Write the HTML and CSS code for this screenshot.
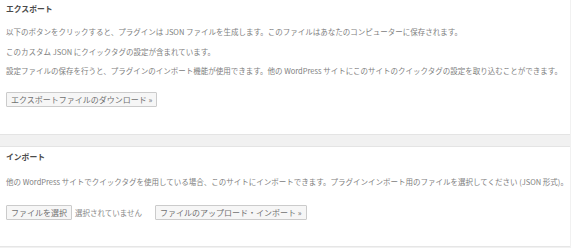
FILE: index.html
```html
<!DOCTYPE html>
<html lang="ja">
<head>
    <meta charset="UTF-8">
    <meta name="viewport" content="width=device-width, initial-scale=1.0">
    <title>エクスポート / インポート</title>
    <link rel="stylesheet" href="styles.css">
</head>
<body>
    <div class="wrap">
        <div class="panel export">
            <h2>エクスポート</h2>
            <p>以下のボタンをクリックすると、プラグインは JSON ファイルを生成します。このファイルはあなたのコンピューターに保存されます。</p>
            <p>このカスタム JSON にクイックタグの設定が含まれています。</p>
            <p>設定ファイルの保存を行うと、プラグインのインポート機能が使用できます。他の WordPress サイトにこのサイトのクイックタグの設定を取り込むことができます。</p>
            <button class="btn" type="button">エクスポートファイルのダウンロード »</button>
        </div>

        <div class="divider"></div>

        <div class="panel import">
            <h2>インポート</h2>
            <p>他の WordPress サイトでクイックタグを使用している場合、このサイトにインポートできます。プラグインインポート用のファイルを選択してください (JSON 形式)。</p>
            <div class="file-row">
                <button class="btn" type="button">ファイルを選択</button>
                <span class="file-name">選択されていません</span>
                <button class="btn upload" type="button">ファイルのアップロード・インポート »</button>
            </div>
        </div>
    </div>
</body>
</html>
```

FILE: styles.css
```css
body {
    margin: 0;
    background: #f1f1f1;
    font-family: "Noto Sans CJK JP", "Noto Sans", sans-serif;
}

.wrap {
    width: 570px;
}

.panel {
    background: #fff;
    padding-left: 6px;
}

.export {
    padding-top: 3px;
    height: 131px;
}

.import {
    padding-top: 4px;
    height: 95px;
    border-bottom: 1px solid #e6e6e6;
}

.divider {
    height: 11px;
    background: #f1f1f1;
    border-top: 1px solid #e4e4e4;
    border-bottom: 1px solid #e4e4e4;
}

h2 {
    margin: 0 0 11px;
    font-size: 7.8px;
    line-height: 12px;
    font-weight: bold;
    color: #4a4a4a;
}

.import h2 {
    margin-bottom: 13px;
}

p {
    margin: 0 0 7.5px;
    font-size: 7.5px;
    line-height: 12px;
    color: #808080;
    white-space: nowrap;
}

.btn {
    height: 15px;
    padding: 0 4px;
    border: 1px solid #cbcbcb;
    border-radius: 1px;
    background: #f6f6f6;
    font-family: inherit;
    font-size: 8px;
    line-height: 13px;
    color: #707070;
    white-space: nowrap;
}

.export .btn {
    display: block;
    margin-top: 15px;
}

.file-row {
    display: flex;
    align-items: center;
    margin-top: 17px;
}

.file-name {
    margin-left: 3px;
    font-size: 7.5px;
    color: #888;
}

.upload {
    margin-left: 13px;
}
```
